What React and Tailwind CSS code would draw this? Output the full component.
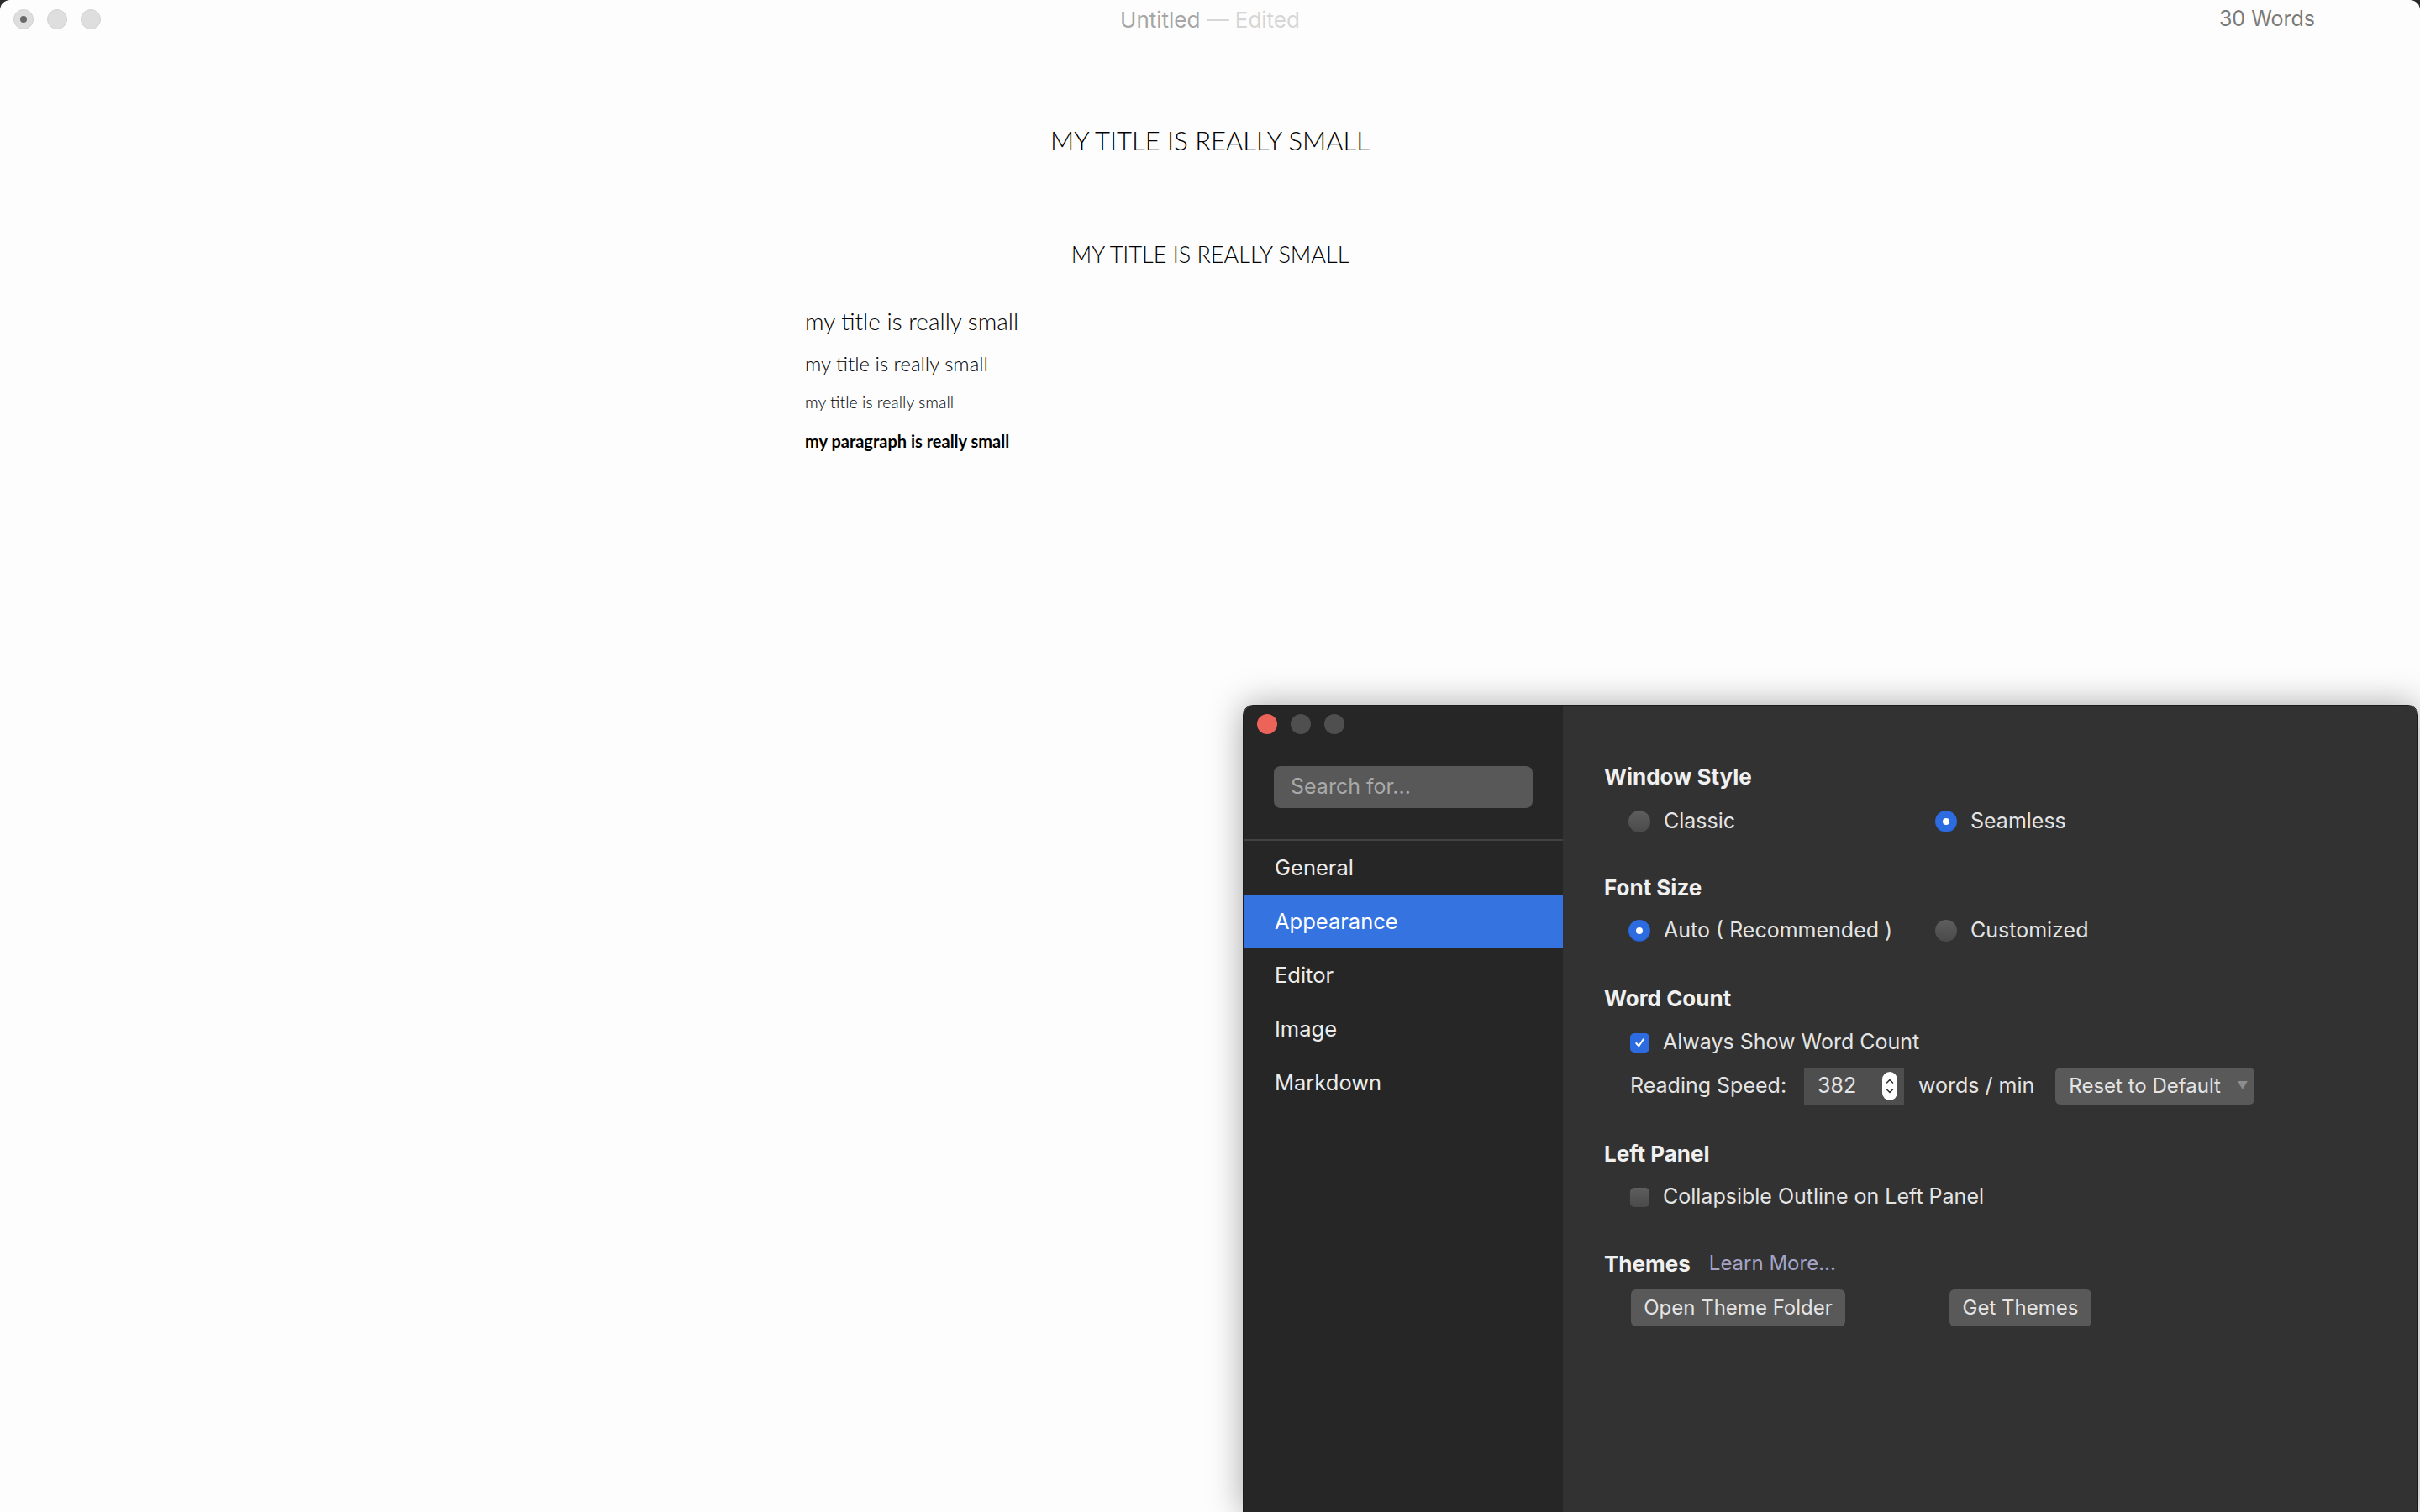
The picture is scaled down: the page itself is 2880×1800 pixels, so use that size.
import React from 'react';

const ui = { fontFamily: 'Inter, "Noto Sans", sans-serif' };
const doc = { fontFamily: 'Lato, "Liberation Sans", sans-serif' };

function Lights({ dark }) {
  if (dark) {
    return (
      <div className="flex items-center gap-[16px]">
        <span className="w-[24px] h-[24px] rounded-full bg-[#ec6459]" />
        <span className="w-[24px] h-[24px] rounded-full bg-[#4f4f4f]" />
        <span className="w-[24px] h-[24px] rounded-full bg-[#4f4f4f]" />
      </div>
    );
  }
  return (
    <div className="flex items-center gap-[16px]">
      <span className="w-[24px] h-[24px] rounded-full bg-[#dedede] border border-[#d2d2d2] flex items-center justify-center">
        <span className="w-[8px] h-[8px] rounded-full bg-[#6a6a6a]" />
      </span>
      <span className="w-[24px] h-[24px] rounded-full bg-[#dedede] border border-[#d2d2d2]" />
      <span className="w-[24px] h-[24px] rounded-full bg-[#dedede] border border-[#d2d2d2]" />
    </div>
  );
}

function Radio({ on, label }) {
  return (
    <div className="flex items-center gap-[16px]">
      {on ? (
        <span className="w-[26px] h-[26px] rounded-full bg-[#2d6be0] flex items-center justify-center shadow-[inset_0_-1px_0_rgba(0,0,0,0.2)]">
          <span className="w-[8px] h-[8px] rounded-full bg-white" />
        </span>
      ) : (
        <span className="w-[26px] h-[26px] rounded-full bg-gradient-to-b from-[#5e5e5e] to-[#4a4a4a]" />
      )}
      <span>{label}</span>
    </div>
  );
}

function Check({ on, label }) {
  return (
    <div className="flex items-center gap-[16px] pl-[2px]">
      {on ? (
        <span className="w-[23px] h-[23px] rounded-[5px] bg-[#2d6be0] flex items-center justify-center">
          <svg width="15" height="15" viewBox="0 0 16 16" fill="none" stroke="white" strokeWidth="2.2" strokeLinecap="round" strokeLinejoin="round">
            <path d="M3.5 8.5 L6.8 12 L12.5 3.5" />
          </svg>
        </span>
      ) : (
        <span className="w-[23px] h-[23px] rounded-[5px] bg-gradient-to-b from-[#5e5e5e] to-[#4a4a4a]" />
      )}
      <span>{label}</span>
    </div>
  );
}

function Heading({ children }) {
  return <div className="h-[40px] flex items-center font-bold text-[26px] text-[#f0f0f0]">{children}</div>;
}

function Preferences() {
  const items = ['General', 'Appearance', 'Editor', 'Image', 'Markdown'];
  return (
    <div
      style={ui}
      className="absolute left-[1479px] top-[839px] w-[1399px] h-[963px] rounded-t-[12px] overflow-hidden border border-[#1c1c1c] shadow-[0_0_40px_rgba(0,0,0,0.35)] flex"
    >
      <div className="w-[380px] bg-[#262626] flex flex-col">
        <div className="h-[44px] pl-[16px] flex items-center">
          <Lights dark />
        </div>
        <div className="pt-[28px] pl-[36px]">
          <div className="w-[308px] h-[50px] rounded-[8px] bg-[#585858] flex items-center pl-[20px] text-[25px] text-[#a9a9a9]">
            Search for...
          </div>
        </div>
        <div className="mt-[37px] h-[2px] bg-[#424242]" />
        <div className="flex flex-col text-[25.5px]">
          {items.map((it) => (
            <div
              key={it}
              className={
                'h-[64px] flex items-center pl-[37px] ' +
                (it === 'Appearance' ? 'bg-[#3574e0] text-white' : 'text-[#ececec]')
              }
            >
              {it}
            </div>
          ))}
        </div>
      </div>

      <div className="flex-1 bg-[#323232] pl-[49px] pt-[64px] text-[25px] text-[#e4e4e4]">
        <Heading>Window Style</Heading>
        <div className="mt-[14px] h-[40px] pl-[29px] grid grid-cols-[365px_1fr] items-center">
          <Radio label="Classic" />
          <Radio on label="Seamless" />
        </div>

        <div className="mt-[38px]">
          <Heading>Font Size</Heading>
        </div>
        <div className="mt-[12px] h-[40px] pl-[29px] grid grid-cols-[365px_1fr] items-center">
          <Radio on label="Auto ( Recommended )" />
          <Radio label="Customized" />
        </div>

        <div className="mt-[40px]">
          <Heading>Word Count</Heading>
        </div>
        <div className="mt-[13px] h-[40px] pl-[29px] flex items-center">
          <Check on label="Always Show Word Count" />
        </div>
        <div className="mt-[8px] h-[48px] pl-[31px] flex items-center">
          <span className="w-[207px]">Reading Speed:</span>
          <div className="w-[119px] h-[44px] bg-[#4e4e4e] flex items-center pl-[16px] pr-[8px] justify-between">
            <span>382</span>
            <span className="w-[18px] h-[34px] rounded-[9px] bg-white flex flex-col items-center justify-center gap-[6px]">
              <svg width="10" height="6" viewBox="0 0 10 6" fill="none" stroke="#333" strokeWidth="1.6" strokeLinecap="round" strokeLinejoin="round">
                <path d="M1.5 5 L5 1.5 L8.5 5" />
              </svg>
              <svg width="10" height="6" viewBox="0 0 10 6" fill="none" stroke="#333" strokeWidth="1.6" strokeLinecap="round" strokeLinejoin="round">
                <path d="M1.5 1 L5 4.5 L8.5 1" />
              </svg>
            </span>
          </div>
          <span className="ml-[17px]">words / min</span>
          <div className="ml-[25px] w-[237px] h-[44px] rounded-[6px] bg-[#595959] flex items-center justify-between pl-[16px] pr-[8px]">
            <span className="text-[24px]">Reset to Default</span>
            <span className="text-[13px] text-[#8d8d8d]">▼</span>
          </div>
        </div>

        <div className="mt-[36px]">
          <Heading>Left Panel</Heading>
        </div>
        <div className="mt-[12px] h-[40px] pl-[29px] flex items-center">
          <Check label="Collapsible Outline on Left Panel" />
        </div>

        <div className="mt-[39px] h-[40px] flex items-center gap-[22px]">
          <span className="font-bold text-[26px] text-[#f0f0f0]">Themes</span>
          <span className="text-[#a6a4c6] text-[24px]">Learn More...</span>
        </div>
        <div className="mt-[11px] pl-[32px] flex items-center text-[24px]">
          <div className="w-[255px] h-[44px] rounded-[6px] bg-[#595959] flex items-center justify-center">Open Theme Folder</div>
          <div className="ml-[124px] w-[169px] h-[44px] rounded-[6px] bg-[#595959] flex items-center justify-center">Get Themes</div>
        </div>
      </div>
    </div>
  );
}

export default function App() {
  return (
    <div className="relative w-[2880px] h-[1800px] bg-[#2a2a2a] overflow-hidden">
      <div className="w-full h-full bg-[#fdfdfd] rounded-t-[12px]">
        <div style={ui} className="h-[46px] px-[16px] grid grid-cols-[1fr_auto_1fr] items-center text-[25px]">
          <Lights />
          <div className="flex text-[26px]">
            <span className="text-[#a6a6a6]">Untitled</span>
            <span className="text-[#d6d6d6] ml-[8px]">— Edited</span>
          </div>
          <div className="text-right pr-[109px] text-[#7b7b7b]">30 Words</div>
        </div>

        <div style={doc} className="mx-auto w-[964px] pt-[101px] text-black">
          <div className="h-[40px] flex items-center justify-center text-[31px] font-light">MY TITLE IS REALLY SMALL</div>
          <div className="mt-[98px] h-[36px] flex items-center justify-center text-[27px] font-light">MY TITLE IS REALLY SMALL</div>
          <div className="mt-[45px] h-[32px] flex items-center text-[28px] font-light">my title is really small</div>
          <div className="mt-[21px] h-[28px] flex items-center text-[24px] font-light">my title is really small</div>
          <div className="mt-[20px] h-[24px] flex items-center text-[19.5px] font-light">my title is really small</div>
          <div className="mt-[23px] h-[22px] flex items-center text-[20px] font-bold">my paragraph is really small</div>
        </div>
      </div>
      <Preferences />
    </div>
  );
}
